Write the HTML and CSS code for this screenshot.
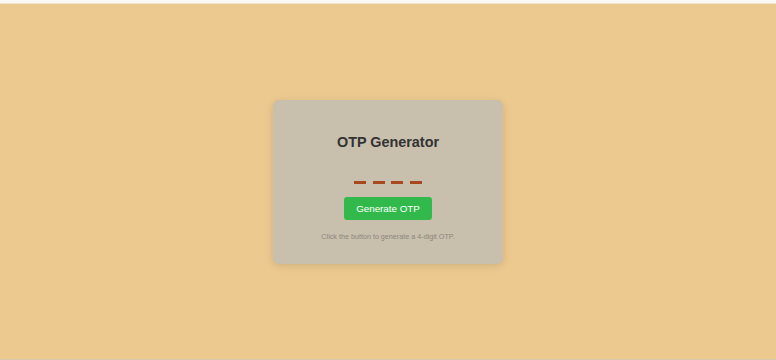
FILE: index.html
```html
<!DOCTYPE html>
<html>
<head>
<meta charset="utf-8">
<link rel="stylesheet" href="styles.css">
<title>OTP Generator</title>
</head>
<body>
<div class="topbar"></div>
<main class="stage">
  <section class="card">
    <h2 class="title">OTP Generator</h2>
    <div class="otp" aria-label="_ _ _ _">
      <span class="digit"></span>
      <span class="digit"></span>
      <span class="digit"></span>
      <span class="digit"></span>
    </div>
    <button class="btn">Generate OTP</button>
    <p class="hint">Click the button to generate a 4-digit OTP.</p>
  </section>
</main>
<div class="bottomline"></div>
</body>
</html>
```
FILE: styles.css
```css
html, body {
  margin: 0;
  padding: 0;
}
body {
  width: 776px;
  height: 360px;
  overflow: hidden;
  font-family: "Liberation Sans", Arial, sans-serif;
  background: #ecc98f;
}
.topbar {
  height: 4px;
  background: #fbf9f6;
  border-bottom: 1px solid #f1e4cc;
  box-sizing: border-box;
}
.stage {
  height: 355px;
  display: flex;
  align-items: center;
  justify-content: center;
  background: #ecc98f;
}
.bottomline {
  height: 1px;
  background: #d8c8a8;
}
.card {
  width: 230px;
  height: 164px;
  box-sizing: border-box;
  background: #c8bfac;
  border-radius: 6px;
  box-shadow: 0 2px 8px rgba(0, 0, 0, 0.12);
  display: flex;
  flex-direction: column;
  align-items: center;
  padding-top: 34px;
}
.title {
  margin: 0;
  font-size: 14.4px;
  line-height: 17px;
  font-weight: bold;
  color: #333;
}
.otp {
  margin-top: 30px;
  display: flex;
  gap: 6.5px;
  height: 3px;
}
.digit {
  width: 12px;
  height: 3px;
  background: #a8481e;
}
.btn {
  margin-top: 13px;
  width: 88px;
  height: 23px;
  border: none;
  border-radius: 3px;
  background: #31ba4b;
  color: #fff;
  font-family: "Liberation Sans", Arial, sans-serif;
  font-size: 9.8px;
  padding: 0;
}
.hint {
  margin: 12px 0 0;
  font-size: 7.2px;
  line-height: 9px;
  color: #8c877d;
}
```
